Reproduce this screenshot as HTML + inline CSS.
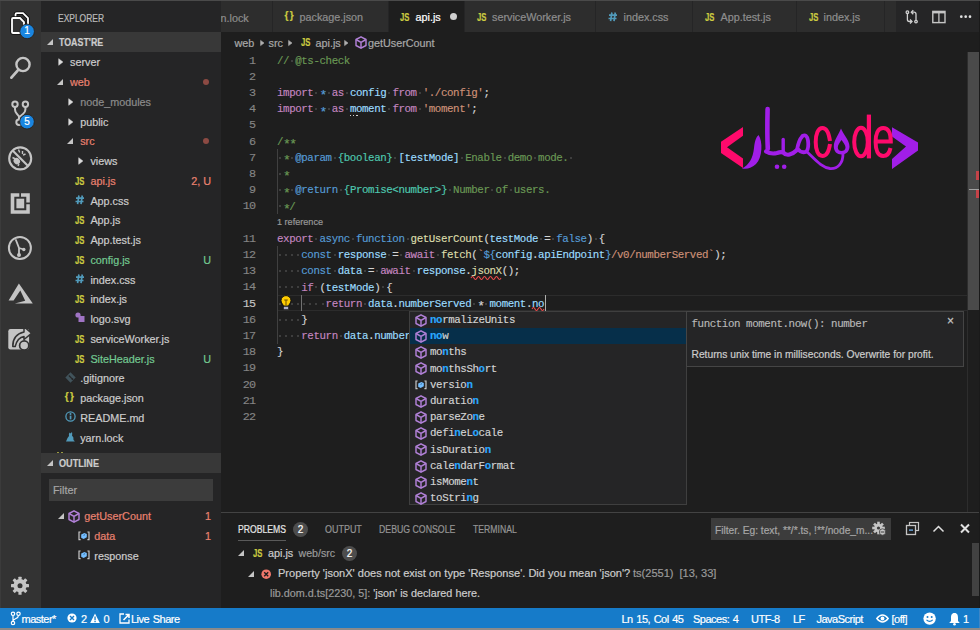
<!DOCTYPE html>
<html><head><meta charset="utf-8"><style>
*{margin:0;padding:0;box-sizing:border-box}
html,body{width:980px;height:630px;overflow:hidden;background:#1e1e1e}
body{position:relative;font-family:"Liberation Sans", sans-serif;color:#ccc}
.a{position:absolute}
.t{position:absolute;white-space:pre;font-family:"Liberation Sans", sans-serif;-webkit-text-stroke:0.2px currentColor}
.m{position:absolute;white-space:pre;font-family:"Liberation Mono", monospace;-webkit-text-stroke:0.15px currentColor}
svg{position:absolute;overflow:visible}
</style></head>
<body>
<div class="a" style="left:0;top:0;width:980px;height:1px;background:#4a4a4a"></div>
<div class="a" style="left:0;top:1px;width:41px;height:608px;background:#333333"></div>
<div class="a" style="left:0;top:1px;width:1px;height:608px;background:#3b3b3b"></div>
<div class="a" style="left:41px;top:1px;width:180px;height:608px;background:#252526"></div>
<div class="a" style="left:0;top:608px;width:980px;height:21px;background:#167bc9"></div>
<div class="a" style="left:0;top:628px;width:980px;height:2px;background:#8a8a8a"></div>
<svg style="left:0;top:0" width="41" height="360">
<!-- explorer (files) -->
<path d="M15.5 17 V14.5 Q15.5 13.2 16.8 13.2 H23 L28 18.2 V28" fill="none" stroke="#111" stroke-width="3.6"/>
<path d="M15.5 17 V14.5 Q15.5 13.2 16.8 13.2 H23 L28 18.2 V28" fill="none" stroke="#fff" stroke-width="1.8"/>
<path d="M13 18 H20 L24 22 V33 H13 Q12 33 12 32 V19 Q12 18 13 18 Z" fill="#333" stroke="#111" stroke-width="3.6"/>
<path d="M13 18 H20 L24 22 V33 H13 Q12 33 12 32 V19 Q12 18 13 18 Z" fill="#333" stroke="#fff" stroke-width="1.8"/>
<circle cx="27.1" cy="31.4" r="7.3" fill="#1a85e0" stroke="#2a1c10" stroke-width="0.8"/>
<!-- search -->
<circle cx="23" cy="64.5" r="6.6" fill="none" stroke="#c5c5c5" stroke-width="2.4"/>
<line x1="17.6" y1="70.6" x2="11.4" y2="77.6" stroke="#c5c5c5" stroke-width="2.8" stroke-linecap="round"/>
<!-- scm -->
<circle cx="15" cy="104.3" r="2.7" fill="none" stroke="#c5c5c5" stroke-width="2"/>
<circle cx="25.4" cy="104.3" r="2.7" fill="none" stroke="#c5c5c5" stroke-width="2"/>
<circle cx="19" cy="122.2" r="2.7" fill="none" stroke="#c5c5c5" stroke-width="2"/>
<path d="M15 107 V109.5 Q15 112 17 114 L19 116.5 V119.5 M25.4 107 V109.5 Q25.4 112 23 114 L19.5 117" fill="none" stroke="#c5c5c5" stroke-width="2"/>
<circle cx="27" cy="121.7" r="7.3" fill="#1a85e0" stroke="#2a1c10" stroke-width="0.8"/>
<!-- debug -->
<circle cx="20.2" cy="158.4" r="11" fill="none" stroke="#c5c5c5" stroke-width="2.1"/>
<line x1="12.6" y1="150.6" x2="27.8" y2="165.8" stroke="#c5c5c5" stroke-width="2.1"/>
<ellipse cx="16.8" cy="161.2" rx="3" ry="3.4" transform="rotate(-45 16.8 161.2)" fill="#c5c5c5"/>
<path d="M18.5 149.5 l1.2 3 M22.5 151 l0 3 M25.5 154 l-2.5 1.2 M12.5 157.5 l3 1.5 M18 166 l1 -2" stroke="#c5c5c5" stroke-width="1.4"/>
<!-- extensions -->
<path d="M10.7 193.3 H19.3 V196.8 H14.3 V210.2 H26.3 V204.3 H29.8 V213.7 H10.7 Z" fill="#c5c5c5"/>
<path d="M21 193.3 H29.8 V202.6 H26.3 V196.8 H21 Z" fill="#c5c5c5"/>
<rect x="16.4" y="198.7" width="7.8" height="9.6" fill="#c5c5c5"/>
<!-- gitlens -->
<circle cx="19.9" cy="247.9" r="11" fill="none" stroke="#c5c5c5" stroke-width="2"/>
<path d="M15.9 240 L19 248 V255 M19 248 L23.8 249.5" fill="none" stroke="#c5c5c5" stroke-width="1.8" stroke-linecap="round"/>
<circle cx="19" cy="255" r="2" fill="#c5c5c5"/><circle cx="23.8" cy="249.5" r="1.7" fill="#c5c5c5"/>
<!-- azure -->
<path d="M18.9 283.6 L8.6 300.4 L13.6 300.4 L20.3 290.6 L25.2 300.8 L14.9 303.4 L32.8 303.4 Z" fill="#c5c5c5"/>
<!-- live share -->
<rect x="8.3" y="329" width="20.8" height="20.5" rx="2.2" fill="#c5c5c5"/>
<path d="M12.8 346.5 Q12.5 334.5 24 332 V326.8 L31.5 333.3 L24 339.5 V336.6 Q17.5 337.5 15.2 346.5 Z" fill="#c5c5c5" stroke="#333" stroke-width="1.5" stroke-linejoin="round"/>
<circle cx="24.2" cy="345.5" r="4.6" fill="#c5c5c5" stroke="#333" stroke-width="1.7"/>
</svg>
<div class="t" style="left:20px;top:24.4px;width:14.2px;text-align:center;font-size:10px;line-height:14px;color:#fff">1</div>
<div class="t" style="left:19.9px;top:114.7px;width:14.2px;text-align:center;font-size:10px;line-height:14px;color:#fff">5</div>
<svg style="left:0;top:570" width="41" height="35">
<g transform="translate(20,15.7)" fill="#c5c5c5">
<circle r="6.6"/>
<rect x="-1.6" y="-9" width="3.2" height="4" rx="0.5" transform="rotate(0)"/><rect x="-1.6" y="-9" width="3.2" height="4" rx="0.5" transform="rotate(45)"/><rect x="-1.6" y="-9" width="3.2" height="4" rx="0.5" transform="rotate(90)"/><rect x="-1.6" y="-9" width="3.2" height="4" rx="0.5" transform="rotate(135)"/><rect x="-1.6" y="-9" width="3.2" height="4" rx="0.5" transform="rotate(180)"/><rect x="-1.6" y="-9" width="3.2" height="4" rx="0.5" transform="rotate(225)"/><rect x="-1.6" y="-9" width="3.2" height="4" rx="0.5" transform="rotate(270)"/><rect x="-1.6" y="-9" width="3.2" height="4" rx="0.5" transform="rotate(315)"/>
<circle r="2.5" fill="#333"/>
</g></svg>
<div class="t" style="left:58px;top:13px;font-size:10.4px;transform:scaleX(0.813);transform-origin:0 0;color:#bbbbbb;line-height:12px">EXPLORER</div>
<div class="a" style="left:41px;top:32px;width:180px;height:20px;background:#383838"></div>
<svg style="left:47px;top:39px" width="7" height="7"><path d="M6 0 V6 H0 Z" fill="#c5c5c5"/></svg>
<div class="t" style="left:59px;top:37px;font-size:10px;font-weight:bold;transform:scaleX(0.884);transform-origin:0 0;color:#cccccc;line-height:12px">TOAST'RE</div>
<svg style="left:57.7px;top:58.375px" width="6" height="8"><path d="M0.7 0.7 L4.9 4 L0.7 7.3 Z" fill="#dcdcdc" stroke="#dcdcdc" stroke-width="0.5"/></svg>
<div class="t" style="left:70.0px;top:53.4px;font-size:10.8px;line-height:19.75px;color:#cccccc">server</div>
<svg style="left:57.0px;top:79.125px" width="7" height="7"><path d="M6 0 V6 H0 Z" fill="#c5c5c5"/></svg>
<div class="t" style="left:70.0px;top:73.15px;font-size:10.8px;line-height:19.75px;color:#ea8270">web</div>
<div class="a" style="left:203px;top:78.625px;width:6px;height:6px;border-radius:50%;background:#8c4a43"></div>
<svg style="left:67.9px;top:97.875px" width="6" height="8"><path d="M0.7 0.7 L4.9 4 L0.7 7.3 Z" fill="#dcdcdc" stroke="#dcdcdc" stroke-width="0.5"/></svg>
<div class="t" style="left:80.2px;top:92.9px;font-size:10.8px;line-height:19.75px;color:#8b8b8b">node_modules</div>
<svg style="left:67.9px;top:117.625px" width="6" height="8"><path d="M0.7 0.7 L4.9 4 L0.7 7.3 Z" fill="#dcdcdc" stroke="#dcdcdc" stroke-width="0.5"/></svg>
<div class="t" style="left:80.2px;top:112.65px;font-size:10.8px;line-height:19.75px;color:#cccccc">public</div>
<svg style="left:67.2px;top:138.375px" width="7" height="7"><path d="M6 0 V6 H0 Z" fill="#c5c5c5"/></svg>
<div class="t" style="left:80.2px;top:132.4px;font-size:10.8px;line-height:19.75px;color:#ea8270">src</div>
<div class="a" style="left:203px;top:137.875px;width:6px;height:6px;border-radius:50%;background:#8c4a43"></div>
<svg style="left:78.10000000000001px;top:157.125px" width="6" height="8"><path d="M0.7 0.7 L4.9 4 L0.7 7.3 Z" fill="#dcdcdc" stroke="#dcdcdc" stroke-width="0.5"/></svg>
<div class="t" style="left:90.4px;top:152.15px;font-size:10.8px;line-height:19.75px;color:#cccccc">views</div>
<div class="t" style="left:75.4px;top:174.775px;font-size:9.6px;font-weight:bold;color:#cbcb41;line-height:12px;letter-spacing:0px;transform:scale(0.8,1.12);transform-origin:0 0">JS</div>
<div class="t" style="left:90.4px;top:171.9px;font-size:10.8px;line-height:19.75px;color:#ea8270">api.js</div>
<div class="t" style="right:769px;top:171.9px;font-size:10.8px;line-height:19.75px;color:#ea8270">2, U</div>
<svg style="left:75.4px;top:195.125px" width="10" height="10"><g stroke="#519aba" stroke-width="1.7"><path d="M3.9 0.5 L2.6 9.2 M7.3 0.5 L6 9.2"/><path d="M1 3.2 H9 M0.5 6.5 H8.5"/></g></svg>
<div class="t" style="left:90.4px;top:191.65px;font-size:10.8px;line-height:19.75px;color:#cccccc">App.css</div>
<div class="t" style="left:75.4px;top:214.275px;font-size:9.6px;font-weight:bold;color:#cbcb41;line-height:12px;letter-spacing:0px;transform:scale(0.8,1.12);transform-origin:0 0">JS</div>
<div class="t" style="left:90.4px;top:211.4px;font-size:10.8px;line-height:19.75px;color:#cccccc">App.js</div>
<div class="t" style="left:75.4px;top:234.025px;font-size:9.6px;font-weight:bold;color:#cbcb41;line-height:12px;letter-spacing:0px;transform:scale(0.8,1.12);transform-origin:0 0">JS</div>
<div class="t" style="left:90.4px;top:231.15px;font-size:10.8px;line-height:19.75px;color:#cccccc">App.test.js</div>
<div class="t" style="left:75.4px;top:253.775px;font-size:9.6px;font-weight:bold;color:#cbcb41;line-height:12px;letter-spacing:0px;transform:scale(0.8,1.12);transform-origin:0 0">JS</div>
<div class="t" style="left:90.4px;top:250.9px;font-size:10.8px;line-height:19.75px;color:#73c991">config.js</div>
<div class="t" style="right:769px;top:250.9px;font-size:10.8px;line-height:19.75px;color:#73c991">U</div>
<svg style="left:75.4px;top:274.125px" width="10" height="10"><g stroke="#519aba" stroke-width="1.7"><path d="M3.9 0.5 L2.6 9.2 M7.3 0.5 L6 9.2"/><path d="M1 3.2 H9 M0.5 6.5 H8.5"/></g></svg>
<div class="t" style="left:90.4px;top:270.65px;font-size:10.8px;line-height:19.75px;color:#cccccc">index.css</div>
<div class="t" style="left:75.4px;top:293.275px;font-size:9.6px;font-weight:bold;color:#cbcb41;line-height:12px;letter-spacing:0px;transform:scale(0.8,1.12);transform-origin:0 0">JS</div>
<div class="t" style="left:90.4px;top:290.4px;font-size:10.8px;line-height:19.75px;color:#cccccc">index.js</div>
<svg style="left:75.4px;top:311.625px" width="10" height="12"><circle cx="3" cy="3" r="2.6" fill="#a074c4"/><rect x="3.5" y="4" width="6" height="6" fill="#a074c4"/></svg>
<div class="t" style="left:90.4px;top:310.15px;font-size:10.8px;line-height:19.75px;color:#cccccc">logo.svg</div>
<div class="t" style="left:75.4px;top:332.775px;font-size:9.6px;font-weight:bold;color:#cbcb41;line-height:12px;letter-spacing:0px;transform:scale(0.8,1.12);transform-origin:0 0">JS</div>
<div class="t" style="left:90.4px;top:329.9px;font-size:10.8px;line-height:19.75px;color:#cccccc">serviceWorker.js</div>
<div class="t" style="left:75.4px;top:352.525px;font-size:9.6px;font-weight:bold;color:#cbcb41;line-height:12px;letter-spacing:0px;transform:scale(0.8,1.12);transform-origin:0 0">JS</div>
<div class="t" style="left:90.4px;top:349.65px;font-size:10.8px;line-height:19.75px;color:#73c991">SiteHeader.js</div>
<div class="t" style="right:769px;top:349.65px;font-size:10.8px;line-height:19.75px;color:#73c991">U</div>
<svg style="left:64.7px;top:371.875px" width="12" height="12"><path d="M5.5 0.3 L10.7 5.5 L5.5 10.7 L0.3 5.5 Z" fill="#41535b"/><path d="M3.8 3.5 L7.5 7.2" stroke="#252526" stroke-width="1.1"/><circle cx="7.5" cy="7.2" r="0.9" fill="#252526"/></svg>
<div class="t" style="left:80.2px;top:369.4px;font-size:10.8px;line-height:19.75px;color:#cccccc">.gitignore</div>
<div class="t" style="left:64.7px;top:390.625px;font-size:10px;font-weight:bold;color:#cbcb41;line-height:12px;letter-spacing:1.4px">{}</div>
<div class="t" style="left:80.2px;top:389.15px;font-size:10.8px;line-height:19.75px;color:#cccccc">package.json</div>
<svg style="left:65.2px;top:411.375px" width="12" height="12"><circle cx="5.5" cy="5.5" r="4.6" fill="none" stroke="#519aba" stroke-width="1.3"/><rect x="4.7" y="4.6" width="1.7" height="3.8" fill="#519aba"/><circle cx="5.5" cy="3" r="1" fill="#519aba"/></svg>
<div class="t" style="left:80.2px;top:408.9px;font-size:10.8px;line-height:19.75px;color:#cccccc">README.md</div>
<svg style="left:65.2px;top:431.125px" width="12" height="12"><path d="M1 10.5 Q2 7 4 5 Q3.5 3 4.5 1.5 L5.5 2.5 L7 1 Q7.5 3 7 4.5 Q9 6 8.5 9 Q9.5 9.5 9.8 10.5 Z" fill="#519aba"/></svg>
<div class="t" style="left:80.2px;top:428.65px;font-size:10.8px;line-height:19.75px;color:#cccccc">yarn.lock</div>
<div class="a" style="left:57px;top:452px;width:2px;height:1px;background:#9a9a40"></div>
<div class="a" style="left:61px;top:452px;width:2px;height:1px;background:#9a9a40"></div>
<div class="a" style="left:41px;top:453px;width:180px;height:20px;background:#383838"></div>
<svg style="left:47px;top:460px" width="7" height="7"><path d="M6 0 V6 H0 Z" fill="#c5c5c5"/></svg>
<div class="t" style="left:59px;top:458px;font-size:10px;font-weight:bold;transform:scaleX(0.911);transform-origin:0 0;color:#cccccc;line-height:12px">OUTLINE</div>
<div class="a" style="left:49px;top:479px;width:164px;height:22px;background:#3c3c3c"></div>
<div class="t" style="left:53px;top:479px;font-size:10.8px;line-height:22px;color:#a6a6a6">Filter</div>
<svg style="left:57.5px;top:512.5px" width="7" height="7"><path d="M6 0 V6 H0 Z" fill="#c5c5c5"/></svg>
<svg style="left:68px;top:509.5px" width="12" height="13"><g fill="none" stroke="#b180d7" stroke-width="1.45" stroke-linejoin="round">
<path d="M6 0.8 L11 3.5 V9.5 L6 12.2 L1 9.5 V3.5 Z"/><path d="M1 3.5 L6 6.3 L11 3.5 M6 6.3 V12.2"/></g></svg>
<svg style="left:77.8px;top:530.6px" width="12" height="10"><g fill="none" stroke="#c8c8c8" stroke-width="1.2">
<path d="M2.6 1 H1 V8.6 H2.6 M9.4 1 H11 V8.6 H9.4"/></g><path d="M3.2 3.6 L6.4 1.9 L8.8 3.1 V6.2 L5.6 7.9 L3.2 6.7 Z" fill="#75beff"/><path d="M5.6 4.4 L7 3.6" stroke="#2a5a80" stroke-width="0.8"/></svg>
<svg style="left:77.8px;top:550.4px" width="12" height="10"><g fill="none" stroke="#c8c8c8" stroke-width="1.2">
<path d="M2.6 1 H1 V8.6 H2.6 M9.4 1 H11 V8.6 H9.4"/></g><path d="M3.2 3.6 L6.4 1.9 L8.8 3.1 V6.2 L5.6 7.9 L3.2 6.7 Z" fill="#75beff"/><path d="M5.6 4.4 L7 3.6" stroke="#2a5a80" stroke-width="0.8"/></svg>
<div class="t" style="left:84.3px;top:507.125px;font-size:10.8px;line-height:19.75px;color:#ea8270">getUserCount</div>
<div class="t" style="right:769px;top:507.125px;font-size:10.8px;line-height:19.75px;color:#ea8270">1</div>
<div class="t" style="left:94.3px;top:526.825px;font-size:10.8px;line-height:19.75px;color:#ea8270">data</div>
<div class="t" style="right:769px;top:526.825px;font-size:10.8px;line-height:19.75px;color:#ea8270">1</div>
<div class="t" style="left:94.3px;top:546.625px;font-size:10.8px;line-height:19.75px;color:#cccccc">response</div>
<div class="a" style="left:221px;top:1px;width:759px;height:31px;background:#252526"></div>
<div class="a" style="left:221px;top:1px;width:51px;height:31px;background:#2d2d2d"></div>
<div class="a" style="left:273px;top:1px;width:115px;height:31px;background:#2d2d2d"></div>
<div class="a" style="left:389px;top:1px;width:75px;height:31px;background:#1e1e1e"></div>
<div class="a" style="left:465px;top:1px;width:130px;height:31px;background:#2d2d2d"></div>
<div class="a" style="left:596px;top:1px;width:96px;height:31px;background:#2d2d2d"></div>
<div class="a" style="left:693px;top:1px;width:103px;height:31px;background:#2d2d2d"></div>
<div class="a" style="left:797px;top:1px;width:87px;height:31px;background:#2d2d2d"></div>
<div class="a" style="left:885px;top:1px;width:11px;height:31px;background:#2d2d2d"></div>
<div class="a" style="left:221px;top:1px;width:51px;height:31px;overflow:hidden"><div class="t" style="left:-0.5px;top:1.7px;font-size:10.8px;line-height:31px;color:#8e8e8e">n.lock</div></div>
<div class="t" style="left:284.5px;top:10px;font-size:10px;font-weight:bold;color:#cbcb41;line-height:12px;letter-spacing:1.4px">{}</div>
<div class="t" style="left:299.5px;top:1.7px;font-size:10.8px;line-height:31px;color:#8e8e8e">package.json</div>
<div class="t" style="left:400px;top:11.4px;font-size:9.6px;font-weight:bold;color:#cbcb41;line-height:12px;letter-spacing:0px;transform:scale(0.8,1.12);transform-origin:0 0">JS</div>
<div class="t" style="left:415.5px;top:1.7px;font-size:10.8px;line-height:31px;color:#ffffff">api.js</div>
<div class="a" style="left:449.7px;top:13px;width:7px;height:7px;border-radius:50%;background:#cfcfcf"></div>
<div class="t" style="left:477px;top:11.4px;font-size:9.6px;font-weight:bold;color:#cbcb41;line-height:12px;letter-spacing:0px;transform:scale(0.8,1.12);transform-origin:0 0">JS</div>
<div class="t" style="left:492px;top:1.7px;font-size:10.8px;line-height:31px;color:#8e8e8e">serviceWorker.js</div>
<svg style="left:608px;top:12px" width="10" height="10"><g stroke="#519aba" stroke-width="1.7"><path d="M3.9 0.5 L2.6 9.2 M7.3 0.5 L6 9.2"/><path d="M1 3.2 H9 M0.5 6.5 H8.5"/></g></svg>
<div class="t" style="left:623.5px;top:1.7px;font-size:10.8px;line-height:31px;color:#8e8e8e">index.css</div>
<div class="t" style="left:705px;top:11.4px;font-size:9.6px;font-weight:bold;color:#cbcb41;line-height:12px;letter-spacing:0px;transform:scale(0.8,1.12);transform-origin:0 0">JS</div>
<div class="t" style="left:720.5px;top:1.7px;font-size:10.8px;line-height:31px;color:#8e8e8e">App.test.js</div>
<div class="t" style="left:809px;top:11.4px;font-size:9.6px;font-weight:bold;color:#cbcb41;line-height:12px;letter-spacing:0px;transform:scale(0.8,1.12);transform-origin:0 0">JS</div>
<div class="t" style="left:823.5px;top:1.7px;font-size:10.8px;line-height:31px;color:#8e8e8e">index.js</div>
<svg style="left:896px;top:1px" width="84" height="31">
<g fill="none" stroke="#d0d0d0" stroke-width="1.3">
<circle cx="11.4" cy="11.2" r="1.3"/><circle cx="20" cy="20.6" r="1.3"/>
<path d="M11.4 12.5 V18.5 Q11.4 20.5 13.4 20.5 H15.5 M20 19.3 V13.2 Q20 11.2 18 11.2 H15.8"/>
<path d="M14 18.5 L16 20.5 L14 22.5 M17.3 9.2 L15.3 11.2 L17.3 13.2"/>
</g>
<rect x="36.8" y="10.4" width="12.2" height="11.2" fill="none" stroke="#c5c5c5" stroke-width="1.4"/>
<rect x="36.8" y="10.4" width="12.2" height="2" fill="#c5c5c5"/>
<line x1="42.9" y1="10.4" x2="42.9" y2="21.6" stroke="#c5c5c5" stroke-width="1.3"/>
<circle cx="65.3" cy="15.7" r="1.35" fill="#e0e0e0"/><circle cx="69.7" cy="15.7" r="1.35" fill="#e0e0e0"/><circle cx="74" cy="15.7" r="1.35" fill="#e0e0e0"/>
</svg>
<div class="t" style="left:234.5px;top:32.7px;font-size:10.8px;line-height:20px;color:#a9a9a9">web</div>
<svg style="left:259.5px;top:38.5px" width="5" height="8"><path d="M0.6 1.4 L4 4 L0.6 6.6 Z" fill="#b0b0b0" stroke="#b0b0b0" stroke-width="0.6"/></svg>
<div class="t" style="left:268.5px;top:32.7px;font-size:10.8px;line-height:20px;color:#a9a9a9">src</div>
<svg style="left:288px;top:38.5px" width="5" height="8"><path d="M0.6 1.4 L4 4 L0.6 6.6 Z" fill="#b0b0b0" stroke="#b0b0b0" stroke-width="0.6"/></svg>
<div class="t" style="left:300.5px;top:36.4px;font-size:9.6px;font-weight:bold;color:#cbcb41;line-height:12px;letter-spacing:0px;transform:scale(0.8,1.12);transform-origin:0 0">JS</div>
<div class="t" style="left:315.5px;top:32.7px;font-size:10.8px;line-height:20px;color:#a9a9a9">api.js</div>
<svg style="left:344px;top:38.5px" width="5" height="8"><path d="M0.6 1.4 L4 4 L0.6 6.6 Z" fill="#b0b0b0" stroke="#b0b0b0" stroke-width="0.6"/></svg>
<svg style="left:355px;top:36px" width="12" height="13"><g fill="none" stroke="#b180d7" stroke-width="1.45" stroke-linejoin="round">
<path d="M6 0.8 L11 3.5 V9.5 L6 12.2 L1 9.5 V3.5 Z"/><path d="M1 3.5 L6 6.3 L11 3.5 M6 6.3 V12.2"/></g></svg>
<div class="t" style="left:368px;top:32.7px;font-size:10.8px;line-height:20px;color:#a9a9a9">getUserCount</div>
<div class="a" style="left:277px;top:294.99999999999994px;width:691px;height:16.2px;border-top:1px solid #2c2c2c;border-bottom:1px solid #2c2c2c"></div>
<div class="m" style="left:248.93px;top:52.5px;letter-spacing:-1.010px;font-size:11.8px;line-height:16.2px;color:#858585">1</div>
<div class="m" style="left:248.93px;top:68.7px;letter-spacing:-1.010px;font-size:11.8px;line-height:16.2px;color:#858585">2</div>
<div class="m" style="left:248.93px;top:84.9px;letter-spacing:-1.010px;font-size:11.8px;line-height:16.2px;color:#858585">3</div>
<div class="m" style="left:248.93px;top:101.1px;letter-spacing:-1.010px;font-size:11.8px;line-height:16.2px;color:#858585">4</div>
<div class="m" style="left:248.93px;top:117.3px;letter-spacing:-1.010px;font-size:11.8px;line-height:16.2px;color:#858585">5</div>
<div class="m" style="left:248.93px;top:133.5px;letter-spacing:-1.010px;font-size:11.8px;line-height:16.2px;color:#858585">6</div>
<div class="m" style="left:248.93px;top:149.7px;letter-spacing:-1.010px;font-size:11.8px;line-height:16.2px;color:#858585">7</div>
<div class="m" style="left:248.93px;top:165.89999999999998px;letter-spacing:-1.010px;font-size:11.8px;line-height:16.2px;color:#858585">8</div>
<div class="m" style="left:248.93px;top:182.1px;letter-spacing:-1.010px;font-size:11.8px;line-height:16.2px;color:#858585">9</div>
<div class="m" style="left:242.86px;top:198.29999999999998px;letter-spacing:-1.010px;font-size:11.8px;line-height:16.2px;color:#858585">10</div>
<div class="m" style="left:242.86px;top:230.7px;letter-spacing:-1.010px;font-size:11.8px;line-height:16.2px;color:#858585">11</div>
<div class="m" style="left:242.86px;top:246.89999999999998px;letter-spacing:-1.010px;font-size:11.8px;line-height:16.2px;color:#858585">12</div>
<div class="m" style="left:242.86px;top:263.09999999999997px;letter-spacing:-1.010px;font-size:11.8px;line-height:16.2px;color:#858585">13</div>
<div class="m" style="left:242.86px;top:279.3px;letter-spacing:-1.010px;font-size:11.8px;line-height:16.2px;color:#858585">14</div>
<div class="m" style="left:242.86px;top:295.49999999999994px;letter-spacing:-1.010px;font-size:11.8px;line-height:16.2px;color:#c6c6c6">15</div>
<div class="m" style="left:242.86px;top:311.7px;letter-spacing:-1.010px;font-size:11.8px;line-height:16.2px;color:#858585">16</div>
<div class="m" style="left:242.86px;top:327.9px;letter-spacing:-1.010px;font-size:11.8px;line-height:16.2px;color:#858585">17</div>
<div class="m" style="left:242.86px;top:344.09999999999997px;letter-spacing:-1.010px;font-size:11.8px;line-height:16.2px;color:#858585">18</div>
<div class="m" style="left:242.86px;top:360.29999999999995px;letter-spacing:-1.010px;font-size:11.8px;line-height:16.2px;color:#858585">19</div>
<div class="m" style="left:242.86px;top:376.5px;letter-spacing:-1.010px;font-size:11.8px;line-height:16.2px;color:#858585">20</div>
<div class="m" style="left:242.86px;top:392.7px;letter-spacing:-1.010px;font-size:11.8px;line-height:16.2px;color:#858585">21</div>
<div class="m" style="left:242.86px;top:408.9px;letter-spacing:-1.010px;font-size:11.8px;line-height:16.2px;color:#858585">22</div>
<div class="t" style="left:277px;top:214.0px;font-size:9.1px;line-height:16.2px;color:#999999">1 reference</div>
<div class="a" style="left:277.0px;top:149.2px;width:1px;height:64.79999999999998px;background:#404040"></div>
<div class="a" style="left:277.0px;top:246.39999999999998px;width:1px;height:97.19999999999999px;background:#404040"></div>
<div class="a" style="left:301.28px;top:294.99999999999994px;width:1px;height:16.2px;background:#707070"></div>
<div class="a" style="left:291px;top:60px;width:2px;height:2px;background:#3e3e3e"></div>
<div class="m" style="left:277px;top:52.7px;font-size:10.8px;line-height:16.2px;letter-spacing:-0.410px"><span style="color:#6A9955">//</span><span> </span><span style="color:#6A9955">@ts-check</span></div>
<div class="a" style="left:315px;top:92px;width:2px;height:2px;background:#3e3e3e"></div>
<div class="a" style="left:328px;top:92px;width:2px;height:2px;background:#3e3e3e"></div>
<div class="a" style="left:346px;top:92px;width:2px;height:2px;background:#3e3e3e"></div>
<div class="a" style="left:388px;top:92px;width:2px;height:2px;background:#3e3e3e"></div>
<div class="a" style="left:419px;top:92px;width:2px;height:2px;background:#3e3e3e"></div>
<div class="m" style="left:277px;top:85.10000000000001px;font-size:10.8px;line-height:16.2px;letter-spacing:-0.410px"><span style="color:#C586C0">import</span><span> </span><span style="color:#569CD6"><span style="position:relative;top:3.4px;font-size:13px;letter-spacing:-1.73px">*</span></span><span> </span><span style="color:#C586C0">as</span><span> </span><span style="color:#9CDCFE">config</span><span> </span><span style="color:#C586C0">from</span><span> </span><span style="color:#CE9178">&#x27;./config&#x27;</span><span style="color:#D4D4D4">;</span></div>
<div class="a" style="left:315px;top:108px;width:2px;height:2px;background:#3e3e3e"></div>
<div class="a" style="left:328px;top:108px;width:2px;height:2px;background:#3e3e3e"></div>
<div class="a" style="left:346px;top:108px;width:2px;height:2px;background:#3e3e3e"></div>
<div class="a" style="left:388px;top:108px;width:2px;height:2px;background:#3e3e3e"></div>
<div class="a" style="left:419px;top:108px;width:2px;height:2px;background:#3e3e3e"></div>
<div class="m" style="left:277px;top:101.3px;font-size:10.8px;line-height:16.2px;letter-spacing:-0.410px"><span style="color:#C586C0">import</span><span> </span><span style="color:#569CD6"><span style="position:relative;top:3.4px;font-size:13px;letter-spacing:-1.73px">*</span></span><span> </span><span style="color:#C586C0">as</span><span> </span><span style="color:#9CDCFE">moment</span><span> </span><span style="color:#C586C0">from</span><span> </span><span style="color:#CE9178">&#x27;moment&#x27;</span><span style="color:#D4D4D4">;</span></div>
<div class="m" style="left:277px;top:133.7px;font-size:10.8px;line-height:16.2px;letter-spacing:-0.410px"><span style="color:#6A9955">/<span style="position:relative;top:3.4px;font-size:13px;letter-spacing:-1.73px">*</span><span style="position:relative;top:3.4px;font-size:13px;letter-spacing:-1.73px">*</span></span></div>
<div class="a" style="left:279px;top:157px;width:2px;height:2px;background:#3e3e3e"></div>
<div class="a" style="left:291px;top:157px;width:2px;height:2px;background:#3e3e3e"></div>
<div class="a" style="left:334px;top:157px;width:2px;height:2px;background:#3e3e3e"></div>
<div class="a" style="left:394px;top:157px;width:2px;height:2px;background:#3e3e3e"></div>
<div class="a" style="left:461px;top:157px;width:2px;height:2px;background:#3e3e3e"></div>
<div class="a" style="left:504px;top:157px;width:2px;height:2px;background:#3e3e3e"></div>
<div class="a" style="left:534px;top:157px;width:2px;height:2px;background:#3e3e3e"></div>
<div class="a" style="left:570px;top:157px;width:2px;height:2px;background:#3e3e3e"></div>
<div class="m" style="left:277px;top:149.89999999999998px;font-size:10.8px;line-height:16.2px;letter-spacing:-0.410px"><span> </span><span style="color:#6A9955"><span style="position:relative;top:3.4px;font-size:13px;letter-spacing:-1.73px">*</span></span><span> </span><span style="color:#569CD6">@param</span><span> </span><span style="color:#4EC9B0">{boolean}</span><span> </span><span style="color:#9CDCFE">[testMode]</span><span> </span><span style="color:#6A9955">Enable</span><span> </span><span style="color:#6A9955">demo</span><span> </span><span style="color:#6A9955">mode.</span><span> </span></div>
<div class="a" style="left:279px;top:173px;width:2px;height:2px;background:#3e3e3e"></div>
<div class="m" style="left:277px;top:166.09999999999997px;font-size:10.8px;line-height:16.2px;letter-spacing:-0.410px"><span> </span><span style="color:#6A9955"><span style="position:relative;top:3.4px;font-size:13px;letter-spacing:-1.73px">*</span></span></div>
<div class="a" style="left:279px;top:189px;width:2px;height:2px;background:#3e3e3e"></div>
<div class="a" style="left:291px;top:189px;width:2px;height:2px;background:#3e3e3e"></div>
<div class="a" style="left:340px;top:189px;width:2px;height:2px;background:#3e3e3e"></div>
<div class="a" style="left:449px;top:189px;width:2px;height:2px;background:#3e3e3e"></div>
<div class="a" style="left:491px;top:189px;width:2px;height:2px;background:#3e3e3e"></div>
<div class="a" style="left:510px;top:189px;width:2px;height:2px;background:#3e3e3e"></div>
<div class="m" style="left:277px;top:182.29999999999998px;font-size:10.8px;line-height:16.2px;letter-spacing:-0.410px"><span> </span><span style="color:#6A9955"><span style="position:relative;top:3.4px;font-size:13px;letter-spacing:-1.73px">*</span></span><span> </span><span style="color:#569CD6">@return</span><span> </span><span style="color:#4EC9B0">{Promise&lt;number&gt;}</span><span> </span><span style="color:#6A9955">Number</span><span> </span><span style="color:#6A9955">of</span><span> </span><span style="color:#6A9955">users.</span></div>
<div class="a" style="left:279px;top:205px;width:2px;height:2px;background:#3e3e3e"></div>
<div class="m" style="left:277px;top:198.49999999999997px;font-size:10.8px;line-height:16.2px;letter-spacing:-0.410px"><span> </span><span style="color:#6A9955"><span style="position:relative;top:3.4px;font-size:13px;letter-spacing:-1.73px">*</span>/</span></div>
<div class="a" style="left:315px;top:238px;width:2px;height:2px;background:#3e3e3e"></div>
<div class="a" style="left:352px;top:238px;width:2px;height:2px;background:#3e3e3e"></div>
<div class="a" style="left:407px;top:238px;width:2px;height:2px;background:#3e3e3e"></div>
<div class="a" style="left:540px;top:238px;width:2px;height:2px;background:#3e3e3e"></div>
<div class="a" style="left:552px;top:238px;width:2px;height:2px;background:#3e3e3e"></div>
<div class="a" style="left:595px;top:238px;width:2px;height:2px;background:#3e3e3e"></div>
<div class="m" style="left:277px;top:230.89999999999998px;font-size:10.8px;line-height:16.2px;letter-spacing:-0.410px"><span style="color:#C586C0">export</span><span> </span><span style="color:#569CD6">async</span><span> </span><span style="color:#569CD6">function</span><span> </span><span style="color:#DCDCAA">getUserCount</span><span style="color:#D4D4D4">(</span><span style="color:#9CDCFE">testMode</span><span> </span><span style="color:#D4D4D4">=</span><span> </span><span style="color:#569CD6">false</span><span style="color:#D4D4D4">)</span><span> </span><span style="color:#D4D4D4">{</span></div>
<div class="a" style="left:279px;top:254px;width:2px;height:2px;background:#3e3e3e"></div>
<div class="a" style="left:285px;top:254px;width:2px;height:2px;background:#3e3e3e"></div>
<div class="a" style="left:291px;top:254px;width:2px;height:2px;background:#3e3e3e"></div>
<div class="a" style="left:297px;top:254px;width:2px;height:2px;background:#3e3e3e"></div>
<div class="a" style="left:334px;top:254px;width:2px;height:2px;background:#3e3e3e"></div>
<div class="a" style="left:388px;top:254px;width:2px;height:2px;background:#3e3e3e"></div>
<div class="a" style="left:400px;top:254px;width:2px;height:2px;background:#3e3e3e"></div>
<div class="a" style="left:437px;top:254px;width:2px;height:2px;background:#3e3e3e"></div>
<div class="m" style="left:277px;top:247.09999999999997px;font-size:10.8px;line-height:16.2px;letter-spacing:-0.410px"><span>    </span><span style="color:#569CD6">const</span><span> </span><span style="color:#9CDCFE">response</span><span> </span><span style="color:#D4D4D4">=</span><span> </span><span style="color:#C586C0">await</span><span> </span><span style="color:#DCDCAA">fetch</span><span style="color:#D4D4D4">(</span><span style="color:#CE9178">`</span><span style="color:#569CD6">${</span><span style="color:#9CDCFE">config</span><span style="color:#D4D4D4">.</span><span style="color:#9CDCFE">apiEndpoint</span><span style="color:#569CD6">}</span><span style="color:#CE9178">/v0/numberServed`</span><span style="color:#D4D4D4">)</span><span style="color:#D4D4D4">;</span></div>
<div class="a" style="left:279px;top:270px;width:2px;height:2px;background:#3e3e3e"></div>
<div class="a" style="left:285px;top:270px;width:2px;height:2px;background:#3e3e3e"></div>
<div class="a" style="left:291px;top:270px;width:2px;height:2px;background:#3e3e3e"></div>
<div class="a" style="left:297px;top:270px;width:2px;height:2px;background:#3e3e3e"></div>
<div class="a" style="left:334px;top:270px;width:2px;height:2px;background:#3e3e3e"></div>
<div class="a" style="left:364px;top:270px;width:2px;height:2px;background:#3e3e3e"></div>
<div class="a" style="left:376px;top:270px;width:2px;height:2px;background:#3e3e3e"></div>
<div class="a" style="left:413px;top:270px;width:2px;height:2px;background:#3e3e3e"></div>
<div class="m" style="left:277px;top:263.29999999999995px;font-size:10.8px;line-height:16.2px;letter-spacing:-0.410px"><span>    </span><span style="color:#569CD6">const</span><span> </span><span style="color:#9CDCFE">data</span><span> </span><span style="color:#D4D4D4">=</span><span> </span><span style="color:#C586C0">await</span><span> </span><span style="color:#9CDCFE">response</span><span style="color:#D4D4D4">.</span><span style="color:#DCDCAA">jsonX</span><span style="color:#D4D4D4">()</span><span style="color:#D4D4D4">;</span></div>
<div class="a" style="left:279px;top:286px;width:2px;height:2px;background:#3e3e3e"></div>
<div class="a" style="left:285px;top:286px;width:2px;height:2px;background:#3e3e3e"></div>
<div class="a" style="left:291px;top:286px;width:2px;height:2px;background:#3e3e3e"></div>
<div class="a" style="left:297px;top:286px;width:2px;height:2px;background:#3e3e3e"></div>
<div class="a" style="left:315px;top:286px;width:2px;height:2px;background:#3e3e3e"></div>
<div class="a" style="left:382px;top:286px;width:2px;height:2px;background:#3e3e3e"></div>
<div class="m" style="left:277px;top:279.5px;font-size:10.8px;line-height:16.2px;letter-spacing:-0.410px"><span>    </span><span style="color:#C586C0">if</span><span> </span><span style="color:#D4D4D4">(</span><span style="color:#9CDCFE">testMode</span><span style="color:#D4D4D4">)</span><span> </span><span style="color:#D4D4D4">{</span></div>
<div class="a" style="left:279px;top:303px;width:2px;height:2px;background:#3e3e3e"></div>
<div class="a" style="left:285px;top:303px;width:2px;height:2px;background:#3e3e3e"></div>
<div class="a" style="left:291px;top:303px;width:2px;height:2px;background:#3e3e3e"></div>
<div class="a" style="left:297px;top:303px;width:2px;height:2px;background:#3e3e3e"></div>
<div class="a" style="left:303px;top:303px;width:2px;height:2px;background:#3e3e3e"></div>
<div class="a" style="left:309px;top:303px;width:2px;height:2px;background:#3e3e3e"></div>
<div class="a" style="left:315px;top:303px;width:2px;height:2px;background:#3e3e3e"></div>
<div class="a" style="left:322px;top:303px;width:2px;height:2px;background:#3e3e3e"></div>
<div class="a" style="left:364px;top:303px;width:2px;height:2px;background:#3e3e3e"></div>
<div class="a" style="left:473px;top:303px;width:2px;height:2px;background:#3e3e3e"></div>
<div class="a" style="left:485px;top:303px;width:2px;height:2px;background:#3e3e3e"></div>
<div class="m" style="left:277px;top:295.69999999999993px;font-size:10.8px;line-height:16.2px;letter-spacing:-0.410px"><span>        </span><span style="color:#C586C0">return</span><span> </span><span style="color:#9CDCFE">data</span><span style="color:#D4D4D4">.</span><span style="color:#9CDCFE">numberServed</span><span> </span><span style="color:#D4D4D4"><span style="position:relative;top:3.4px;font-size:13px;letter-spacing:-1.73px">*</span></span><span> </span><span style="color:#9CDCFE">moment</span><span style="color:#D4D4D4">.</span><span style="color:#9CDCFE">no</span></div>
<div class="a" style="left:279px;top:319px;width:2px;height:2px;background:#3e3e3e"></div>
<div class="a" style="left:285px;top:319px;width:2px;height:2px;background:#3e3e3e"></div>
<div class="a" style="left:291px;top:319px;width:2px;height:2px;background:#3e3e3e"></div>
<div class="a" style="left:297px;top:319px;width:2px;height:2px;background:#3e3e3e"></div>
<div class="m" style="left:277px;top:311.9px;font-size:10.8px;line-height:16.2px;letter-spacing:-0.410px"><span>    </span><span style="color:#D4D4D4">}</span></div>
<div class="a" style="left:279px;top:335px;width:2px;height:2px;background:#3e3e3e"></div>
<div class="a" style="left:285px;top:335px;width:2px;height:2px;background:#3e3e3e"></div>
<div class="a" style="left:291px;top:335px;width:2px;height:2px;background:#3e3e3e"></div>
<div class="a" style="left:297px;top:335px;width:2px;height:2px;background:#3e3e3e"></div>
<div class="a" style="left:340px;top:335px;width:2px;height:2px;background:#3e3e3e"></div>
<div class="m" style="left:277px;top:328.09999999999997px;font-size:10.8px;line-height:16.2px;letter-spacing:-0.410px"><span>    </span><span style="color:#C586C0">return</span><span> </span><span style="color:#9CDCFE">data</span><span style="color:#D4D4D4">.</span><span style="color:#9CDCFE">numberServed</span><span style="color:#D4D4D4">;</span></div>
<div class="m" style="left:277px;top:344.29999999999995px;font-size:10.8px;line-height:16.2px;letter-spacing:-0.410px"><span style="color:#D4D4D4">}</span></div>
<svg style="left:471.24px;top:275.79999999999995px" width="30.35" height="4"><path d="M0 2 Q1.5 -1 3.0 2 Q4.5 5 6.0 2 Q7.5 -1 9.0 2 Q10.5 5 12.0 2 Q13.5 -1 15.0 2 Q16.5 5 18.0 2 Q19.5 -1 21.0 2 Q22.5 5 24.0 2 Q25.5 -1 27.0 2 Q28.5 5 30.0 2" fill="none" stroke="#f14c4c" stroke-width="1.1"/></svg>
<svg style="left:531.94px;top:306.99999999999994px" width="12.14" height="4"><path d="M0 2 Q1.5 -1 3.0 2 Q4.5 5 6.0 2 Q7.5 -1 9.0 2 Q10.5 5 12.0 2" fill="none" stroke="#f14c4c" stroke-width="1.1"/></svg>
<div class="a" style="left:349.65px;top:114.8px;width:1.5px;height:1.5px;background:#d0d0d0"></div>
<div class="a" style="left:352.95px;top:114.8px;width:1.5px;height:1.5px;background:#d0d0d0"></div>
<div class="a" style="left:356.15px;top:114.8px;width:1.5px;height:1.5px;background:#d0d0d0"></div>
<div class="a" style="left:544.58px;top:294.99999999999994px;width:1.5px;height:16.2px;background:#aeafad"></div>
<svg style="left:280px;top:294.99999999999994px" width="13" height="16">
<path d="M6 0.6 A5 5 0 0 1 11 5.6 C11 7.8 9 9.2 8.6 11 H3.4 C3 9.2 1 7.8 1 5.6 A5 5 0 0 1 6 0.6Z" fill="#ffcc00" stroke="#121212" stroke-width="1"/>
<path d="M4.2 5 h3.6 M6 5 v5" stroke="#6a4f00" stroke-width="1"/>
<rect x="3.6" y="11.5" width="4.8" height="3" fill="#b0b0c8" stroke="#121212" stroke-width="0.5"/>
</svg>
<div class="a" style="left:967px;top:52px;width:1px;height:460px;background:#2d2d2d"></div>
<div class="a" style="left:968px;top:52px;width:12px;height:258px;background:#4a4a4a"></div>
<div class="a" style="left:976px;top:170.5px;width:4px;height:9.5px;background:#c44248"></div>
<div class="a" style="left:976px;top:189.5px;width:4px;height:8.5px;background:#c44248"></div>
<div class="a" style="left:969px;top:188.5px;width:11px;height:1.5px;background:#a0a0a0"></div>
<svg style="left:700px;top:100px" width="230" height="80"><g transform="translate(-700,-100)">
<path d="M743 127 L721 141.7 L721 153 L743 168 L743 158.5 L727 147.3 L743 135.7 Z" fill="#ff0a6c"/>
<path d="M892 127.2 L918 142.4 L918 150.4 L892 169 L892 159 L906 146.5 L892 136.5 Z" fill="#a11ee8"/>
<path d="M758.5 135 C763 141 762.5 158 756 164 C752 168 747 169.5 742 168.5 C749 165 753 158 754 148 C754.5 142 756 137 758.5 135 Z" fill="#a11ee8"/>
<path d="M767.6 109 C767.3 122 767.2 138 767.8 149" fill="none" stroke="#a11ee8" stroke-width="4.6" stroke-linecap="round"/>
<path d="M766 151.5 Q771 154.5 777 153 Q781 151.5 783.2 152.5 Q786 155.5 789.5 154.5 Q793.5 153.5 797 150" fill="none" stroke="#a11ee8" stroke-width="4.2" stroke-linecap="round"/>
<path d="M783.2 139.5 V151" fill="none" stroke="#a11ee8" stroke-width="3.4" stroke-linecap="round"/>
<path d="M797 150 Q798.5 140.5 802.5 136 Q806.8 133.5 808 140.5 Q809 148 806.5 151.5 Q801.5 154 797.5 148.5" fill="none" stroke="#a11ee8" stroke-width="3.8" stroke-linejoin="round"/>
<circle cx="777" cy="166.7" r="2.3" fill="#a11ee8"/><circle cx="784.2" cy="166.7" r="2.3" fill="#a11ee8"/>
<path d="M830 141 C829 134 826.5 128 822.5 128 C818 128 815.7 134 815.7 142 C815.7 150 818 156 822.5 156 C826.5 156 829 151 830 144" fill="none" stroke="#ff0a6c" stroke-width="4"/>
<path d="M841 128.5 C843 134 849.5 140 849.5 146.5 C849.5 151.5 846 154.5 841.5 154.5 C837 154.5 833.8 151.5 833.8 146.5 C833.8 140 839 134 841 128.5 Z M841.5 140 C839.5 143 837.8 145 837.8 147.5 C837.8 150 839.5 151 841.5 151 C843.5 151 845.5 150 845.5 147.5 C845.5 145 843.5 143 841.5 140 Z" fill="#a11ee8" fill-rule="evenodd"/>
<path d="M806 151 C814 158 821 167.5 830 168.5 C838 169 843 163 843 154" fill="none" stroke="#a11ee8" stroke-width="2.8"/>
<ellipse cx="861" cy="142" rx="6.8" ry="14.2" fill="none" stroke="#ff0a6c" stroke-width="4"/>
<rect x="866.8" y="114.6" width="4.2" height="43.8" fill="#ff0a6c"/>
<path d="M875.5 141.5 H890.8 C890.8 133 888 128 883.2 128 C878 128 875.6 134 875.6 142 C875.6 150 878 156 883.2 156 C887 156 889.5 153 890.5 148" fill="none" stroke="#ff0a6c" stroke-width="4"/>
</g></svg>
<div class="a" style="left:408.5px;top:311px;width:278px;height:194px;background:#252526;border:1px solid #3f3f3f;overflow:hidden"></div>
<div class="a" style="left:409.5px;top:328.2px;width:276px;height:16.2px;background:#062f4a"></div>
<svg style="left:415px;top:313.8px" width="12" height="13"><g fill="none" stroke="#b180d7" stroke-width="1.45" stroke-linejoin="round">
<path d="M6 0.8 L11 3.5 V9.5 L6 12.2 L1 9.5 V3.5 Z"/><path d="M1 3.5 L6 6.3 L11 3.5 M6 6.3 V12.2"/></g></svg>
<div class="m" style="left:430px;top:312.0px;font-size:10.8px;line-height:16.2px;color:#d4d4d4;letter-spacing:-0.410px"><span style="color:#2aa8ff;font-weight:bold">n</span><span style="color:#2aa8ff;font-weight:bold">o</span>rmalizeUnits</div>
<svg style="left:415px;top:330.0px" width="12" height="13"><g fill="none" stroke="#b180d7" stroke-width="1.45" stroke-linejoin="round">
<path d="M6 0.8 L11 3.5 V9.5 L6 12.2 L1 9.5 V3.5 Z"/><path d="M1 3.5 L6 6.3 L11 3.5 M6 6.3 V12.2"/></g></svg>
<div class="m" style="left:430px;top:328.2px;font-size:10.8px;line-height:16.2px;color:#d4d4d4;letter-spacing:-0.410px"><span style="color:#2aa8ff;font-weight:bold">n</span><span style="color:#2aa8ff;font-weight:bold">o</span>w</div>
<svg style="left:415px;top:346.2px" width="12" height="13"><g fill="none" stroke="#b180d7" stroke-width="1.45" stroke-linejoin="round">
<path d="M6 0.8 L11 3.5 V9.5 L6 12.2 L1 9.5 V3.5 Z"/><path d="M1 3.5 L6 6.3 L11 3.5 M6 6.3 V12.2"/></g></svg>
<div class="m" style="left:430px;top:344.4px;font-size:10.8px;line-height:16.2px;color:#d4d4d4;letter-spacing:-0.410px">mo<span style="color:#2aa8ff;font-weight:bold">n</span>ths</div>
<svg style="left:415px;top:362.40000000000003px" width="12" height="13"><g fill="none" stroke="#b180d7" stroke-width="1.45" stroke-linejoin="round">
<path d="M6 0.8 L11 3.5 V9.5 L6 12.2 L1 9.5 V3.5 Z"/><path d="M1 3.5 L6 6.3 L11 3.5 M6 6.3 V12.2"/></g></svg>
<div class="m" style="left:430px;top:360.6px;font-size:10.8px;line-height:16.2px;color:#d4d4d4;letter-spacing:-0.410px">mo<span style="color:#2aa8ff;font-weight:bold">n</span>thsSh<span style="color:#2aa8ff;font-weight:bold">o</span>rt</div>
<svg style="left:415px;top:379.8px" width="12" height="10"><g fill="none" stroke="#c8c8c8" stroke-width="1.2">
<path d="M2.6 1 H1 V8.6 H2.6 M9.4 1 H11 V8.6 H9.4"/></g><path d="M3.2 3.6 L6.4 1.9 L8.8 3.1 V6.2 L5.6 7.9 L3.2 6.7 Z" fill="#75beff"/><path d="M5.6 4.4 L7 3.6" stroke="#2a5a80" stroke-width="0.8"/></svg>
<div class="m" style="left:430px;top:376.8px;font-size:10.8px;line-height:16.2px;color:#d4d4d4;letter-spacing:-0.410px">versio<span style="color:#2aa8ff;font-weight:bold">n</span></div>
<svg style="left:415px;top:394.8px" width="12" height="13"><g fill="none" stroke="#b180d7" stroke-width="1.45" stroke-linejoin="round">
<path d="M6 0.8 L11 3.5 V9.5 L6 12.2 L1 9.5 V3.5 Z"/><path d="M1 3.5 L6 6.3 L11 3.5 M6 6.3 V12.2"/></g></svg>
<div class="m" style="left:430px;top:393.0px;font-size:10.8px;line-height:16.2px;color:#d4d4d4;letter-spacing:-0.410px">duratio<span style="color:#2aa8ff;font-weight:bold">n</span></div>
<svg style="left:415px;top:411.0px" width="12" height="13"><g fill="none" stroke="#b180d7" stroke-width="1.45" stroke-linejoin="round">
<path d="M6 0.8 L11 3.5 V9.5 L6 12.2 L1 9.5 V3.5 Z"/><path d="M1 3.5 L6 6.3 L11 3.5 M6 6.3 V12.2"/></g></svg>
<div class="m" style="left:430px;top:409.2px;font-size:10.8px;line-height:16.2px;color:#d4d4d4;letter-spacing:-0.410px">parseZo<span style="color:#2aa8ff;font-weight:bold">n</span>e</div>
<svg style="left:415px;top:427.2px" width="12" height="13"><g fill="none" stroke="#b180d7" stroke-width="1.45" stroke-linejoin="round">
<path d="M6 0.8 L11 3.5 V9.5 L6 12.2 L1 9.5 V3.5 Z"/><path d="M1 3.5 L6 6.3 L11 3.5 M6 6.3 V12.2"/></g></svg>
<div class="m" style="left:430px;top:425.4px;font-size:10.8px;line-height:16.2px;color:#d4d4d4;letter-spacing:-0.410px">defi<span style="color:#2aa8ff;font-weight:bold">n</span>eL<span style="color:#2aa8ff;font-weight:bold">o</span>cale</div>
<svg style="left:415px;top:443.40000000000003px" width="12" height="13"><g fill="none" stroke="#b180d7" stroke-width="1.45" stroke-linejoin="round">
<path d="M6 0.8 L11 3.5 V9.5 L6 12.2 L1 9.5 V3.5 Z"/><path d="M1 3.5 L6 6.3 L11 3.5 M6 6.3 V12.2"/></g></svg>
<div class="m" style="left:430px;top:441.6px;font-size:10.8px;line-height:16.2px;color:#d4d4d4;letter-spacing:-0.410px">isDuratio<span style="color:#2aa8ff;font-weight:bold">n</span></div>
<svg style="left:415px;top:459.59999999999997px" width="12" height="13"><g fill="none" stroke="#b180d7" stroke-width="1.45" stroke-linejoin="round">
<path d="M6 0.8 L11 3.5 V9.5 L6 12.2 L1 9.5 V3.5 Z"/><path d="M1 3.5 L6 6.3 L11 3.5 M6 6.3 V12.2"/></g></svg>
<div class="m" style="left:430px;top:457.79999999999995px;font-size:10.8px;line-height:16.2px;color:#d4d4d4;letter-spacing:-0.410px">cale<span style="color:#2aa8ff;font-weight:bold">n</span>darF<span style="color:#2aa8ff;font-weight:bold">o</span>rmat</div>
<svg style="left:415px;top:475.8px" width="12" height="13"><g fill="none" stroke="#b180d7" stroke-width="1.45" stroke-linejoin="round">
<path d="M6 0.8 L11 3.5 V9.5 L6 12.2 L1 9.5 V3.5 Z"/><path d="M1 3.5 L6 6.3 L11 3.5 M6 6.3 V12.2"/></g></svg>
<div class="m" style="left:430px;top:474.0px;font-size:10.8px;line-height:16.2px;color:#d4d4d4;letter-spacing:-0.410px">isMome<span style="color:#2aa8ff;font-weight:bold">n</span>t</div>
<svg style="left:415px;top:492.0px" width="12" height="13"><g fill="none" stroke="#b180d7" stroke-width="1.45" stroke-linejoin="round">
<path d="M6 0.8 L11 3.5 V9.5 L6 12.2 L1 9.5 V3.5 Z"/><path d="M1 3.5 L6 6.3 L11 3.5 M6 6.3 V12.2"/></g></svg>
<div class="m" style="left:430px;top:490.2px;font-size:10.8px;line-height:16.2px;color:#d4d4d4;letter-spacing:-0.410px">toStri<span style="color:#2aa8ff;font-weight:bold">n</span>g</div>
<div class="a" style="left:686px;top:311px;width:278px;height:56px;background:#252526;border:1px solid #454545"></div>
<div class="m" style="left:691.5px;top:316px;font-size:10.8px;line-height:16px;color:#b8b8b8;letter-spacing:-0.410px">function moment.now(): number</div>
<div class="t" style="left:947px;top:314px;font-size:12px;line-height:14px;color:#c5c5c5">×</div>
<div class="t" style="left:691.5px;top:346.5px;font-size:10.25px;line-height:16px;color:#cccccc">Returns unix time in milliseconds. Overwrite for profit.</div>
<div class="a" style="left:221px;top:511.6px;width:759px;height:1.6px;background:#434343"></div>
<div class="a" style="left:221px;top:513px;width:759px;height:95px;background:#1e1e1e"></div>
<div class="t" style="left:238px;top:523px;font-size:10.4px;transform:scaleX(0.831);transform-origin:0 0;line-height:14px;color:#e7e7e7">PROBLEMS</div>
<div class="a" style="left:293px;top:521.5px;width:15px;height:15px;border-radius:50%;background:#4d4d4d"></div>
<div class="t" style="left:293px;top:521.5px;width:15px;text-align:center;font-size:10px;line-height:15px;color:#fff">2</div>
<div class="a" style="left:238px;top:540px;width:48px;height:1px;background:#5a5a5a"></div>
<div class="t" style="left:325px;top:523px;font-size:10.4px;transform:scaleX(0.862);transform-origin:0 0;line-height:14px;color:#959595">OUTPUT</div>
<div class="t" style="left:379px;top:523px;font-size:10.4px;transform:scaleX(0.842);transform-origin:0 0;line-height:14px;color:#959595">DEBUG CONSOLE</div>
<div class="t" style="left:473px;top:523px;font-size:10.4px;transform:scaleX(0.832);transform-origin:0 0;line-height:14px;color:#959595">TERMINAL</div>
<div class="a" style="left:711px;top:518px;width:180px;height:22px;background:#3c3c3c"></div>
<div class="t" style="left:715px;top:519.5px;font-size:10.2px;line-height:22px;color:#a6a6a6">Filter. Eg: text, **/*.ts, !**/node_m...</div>
<svg style="left:872px;top:521px" width="16" height="16"><g transform="translate(6.5,7)" fill="#c5c5c5"><circle r="4.2"/>
<rect x="-1.3" y="-6.3" width="2.6" height="3" transform="rotate(0)"/><rect x="-1.3" y="-6.3" width="2.6" height="3" transform="rotate(45)"/><rect x="-1.3" y="-6.3" width="2.6" height="3" transform="rotate(90)"/><rect x="-1.3" y="-6.3" width="2.6" height="3" transform="rotate(135)"/><rect x="-1.3" y="-6.3" width="2.6" height="3" transform="rotate(180)"/><rect x="-1.3" y="-6.3" width="2.6" height="3" transform="rotate(225)"/><rect x="-1.3" y="-6.3" width="2.6" height="3" transform="rotate(270)"/><rect x="-1.3" y="-6.3" width="2.6" height="3" transform="rotate(315)"/><circle r="1.6" fill="#3c3c3c"/></g>
<circle cx="10.5" cy="11" r="3.2" fill="#c5c5c5" stroke="#3c3c3c" stroke-width="0.8"/><rect x="8.6" y="10.5" width="3.8" height="1" fill="#3c3c3c"/></svg>
<svg style="left:905px;top:521px" width="70" height="16">
<rect x="4.5" y="1.5" width="9" height="8" fill="none" stroke="#c5c5c5" stroke-width="1.2"/>
<rect x="1.5" y="4.5" width="9" height="9" fill="#1e1e1e" stroke="#c5c5c5" stroke-width="1.3"/>
<rect x="4" y="8.5" width="4" height="1.2" fill="#75beff"/>
<path d="M28.5 10.5 L33.5 5.5 L38.5 10.5" fill="none" stroke="#e0e0e0" stroke-width="1.5"/>
<path d="M56 3.5 L64 11.5 M64 3.5 L56 11.5" stroke="#e0e0e0" stroke-width="2"/>
</svg>
<div class="a" style="left:972px;top:543px;width:8px;height:53px;background:#424242"></div>
<svg style="left:237.5px;top:549.5px" width="7" height="7"><path d="M6 0 V6 H0 Z" fill="#c5c5c5"/></svg>
<div class="t" style="left:253px;top:547.4px;font-size:9.6px;font-weight:bold;color:#cbcb41;line-height:12px;letter-spacing:0px;transform:scale(0.8,1.12);transform-origin:0 0">JS</div>
<div class="t" style="left:268px;top:543px;font-size:10.8px;line-height:20px;color:#cccccc">api.js</div>
<div class="t" style="left:298.5px;top:543px;font-size:10.6px;line-height:20px;color:#9a9a9a">web/src</div>
<div class="a" style="left:342px;top:546px;width:15px;height:15px;border-radius:50%;background:#4d4d4d"></div>
<div class="t" style="left:342px;top:546px;width:15px;text-align:center;font-size:10px;line-height:15px;color:#fff">2</div>
<svg style="left:248px;top:570.5px" width="7" height="7"><path d="M6 0 V6 H0 Z" fill="#c5c5c5"/></svg>
<svg style="left:261px;top:569px" width="11" height="11"><circle cx="5.2" cy="5.2" r="4.8" fill="#f0776b"/><path d="M3.2 3.2 L7.2 7.2 M7.2 3.2 L3.2 7.2" stroke="#1e1e1e" stroke-width="1.4"/></svg>
<div class="t" style="left:278px;top:563.2px;font-size:11.05px;line-height:20px;color:#cccccc">Property 'jsonX' does not exist on type 'Response'. Did you mean 'json'?</div>
<div class="t" style="left:633px;top:563.2px;font-size:11.05px;line-height:20px;color:#9a9a9a">ts(2551)</div>
<div class="t" style="left:679.5px;top:563.2px;font-size:11.05px;line-height:20px;color:#9a9a9a">[13, 33]</div>
<div class="t" style="left:270px;top:583px;font-size:10.8px;line-height:20px;color:#9a9a9a">lib.dom.d.ts[2230, 5]: <span style="color:#cccccc">'json' is declared here.</span></div>
<svg style="left:10px;top:611px" width="12" height="15"><g fill="none" stroke="#fff" stroke-width="1.2">
<circle cx="3" cy="2.8" r="1.7"/><circle cx="8.5" cy="2.8" r="1.7"/><circle cx="3" cy="12" r="1.7"/>
<path d="M3 4.5 V10.3 M8.5 4.5 C8.5 8 3.5 7.5 3 10"/></g></svg>
<div class="t" style="left:21.5px;top:608.6px;font-size:11px;letter-spacing:-0.5px;word-spacing:1px;line-height:20px;color:#ffffff">master*</div>
<svg style="left:67px;top:613px" width="11" height="11"><circle cx="5" cy="5" r="4.6" fill="#fff"/><path d="M3 3 L7 7 M7 3 L3 7" stroke="#167bc9" stroke-width="1.4"/></svg>
<div class="t" style="left:81px;top:608.6px;font-size:11px;letter-spacing:-0.5px;word-spacing:1px;line-height:20px;color:#ffffff">2</div>
<svg style="left:90px;top:612.5px" width="11" height="11"><path d="M5 0.5 L9.8 10 H0.2 Z" fill="#fff"/><rect x="4.4" y="3.5" width="1.3" height="3.8" fill="#167bc9"/><rect x="4.4" y="8" width="1.3" height="1.2" fill="#167bc9"/></svg>
<div class="t" style="left:103.5px;top:608.6px;font-size:11px;letter-spacing:-0.5px;word-spacing:1px;line-height:20px;color:#ffffff">0</div>
<svg style="left:119px;top:613px" width="12" height="11"><path d="M5 1 H1 V10 H10 V6.5" fill="none" stroke="#fff" stroke-width="1.3"/><path d="M4.5 7 L9.5 2 M6.5 1.5 H10 V5" fill="none" stroke="#fff" stroke-width="1.5"/></svg>
<div class="t" style="left:131px;top:608.6px;font-size:11px;letter-spacing:-0.5px;word-spacing:1px;line-height:20px;color:#ffffff">Live Share</div>
<div class="t" style="left:621.5px;top:608.6px;font-size:11px;letter-spacing:-0.5px;word-spacing:1px;line-height:20px;color:#ffffff">Ln 15, Col 45</div>
<div class="t" style="left:693px;top:608.6px;font-size:11px;letter-spacing:-0.5px;word-spacing:1px;line-height:20px;color:#ffffff">Spaces: 4</div>
<div class="t" style="left:751px;top:608.6px;font-size:11px;letter-spacing:-0.5px;word-spacing:1px;line-height:20px;color:#ffffff">UTF-8</div>
<div class="t" style="left:793px;top:608.6px;font-size:11px;letter-spacing:-0.5px;word-spacing:1px;line-height:20px;color:#ffffff">LF</div>
<div class="t" style="left:816.5px;top:608.6px;font-size:11px;letter-spacing:-0.5px;word-spacing:1px;line-height:20px;color:#ffffff">JavaScript</div>
<svg style="left:876px;top:613px" width="14" height="11"><path d="M0.8 5.5 Q6.5 -1.5 12.2 5.5 Q6.5 12.5 0.8 5.5 Z" fill="none" stroke="#fff" stroke-width="1.4"/><circle cx="6.5" cy="5.5" r="1.9" fill="#fff"/></svg>
<div class="t" style="left:891.5px;top:608.6px;font-size:11px;letter-spacing:-0.5px;word-spacing:1px;line-height:20px;color:#ffffff">[off]</div>
<svg style="left:923px;top:612px" width="14" height="14"><circle cx="6.6" cy="6.6" r="6.2" fill="#fff"/><circle cx="4.5" cy="5" r="1" fill="#167bc9"/><circle cx="8.7" cy="5" r="1" fill="#167bc9"/><path d="M3.5 7.8 Q6.6 11 9.7 7.8" fill="none" stroke="#167bc9" stroke-width="1.1"/></svg>
<svg style="left:949px;top:612px" width="12" height="14"><path d="M5.5 1 C8.5 1 9 3.5 9 6 V9 L10.8 11 H0.2 L2 9 V6 C2 3.5 2.5 1 5.5 1 Z" fill="#fff"/><circle cx="5.5" cy="12.3" r="1.3" fill="#fff"/></svg>
<div class="t" style="left:963px;top:608.6px;font-size:11px;letter-spacing:-0.5px;word-spacing:1px;line-height:20px;color:#ffffff">1</div>
<div class="a" style="left:979px;top:1px;width:1px;height:607px;background:#1a1a1a"></div>
<div class="a" style="left:979px;top:608px;width:1px;height:20px;background:#3d86c6"></div>
</body></html>
